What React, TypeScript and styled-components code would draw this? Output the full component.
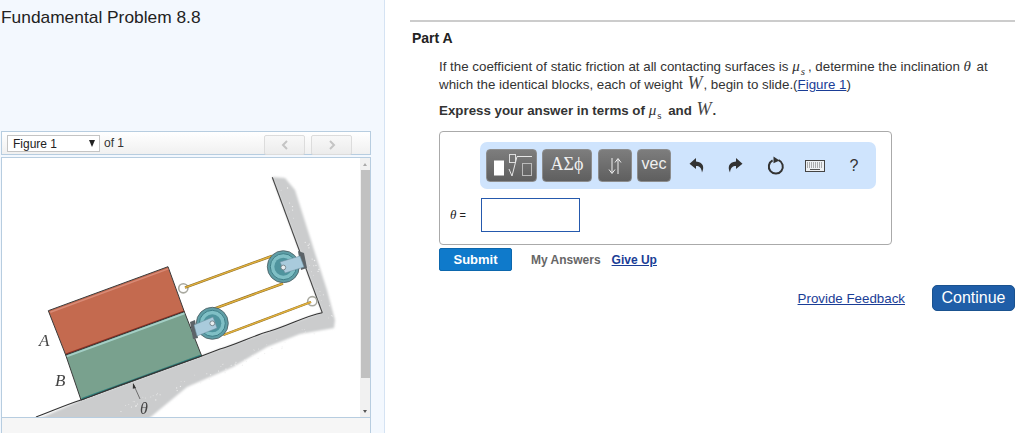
import React from "react";
import styled, { createGlobalStyle } from "styled-components";

const Global = createGlobalStyle`
  html, body { margin: 0; padding: 0; background: #fff; overflow: hidden; }
  body { font-family: "Liberation Sans", Arial, sans-serif; color: #333; }
`;
const Page = styled.div`display: flex; width: 1024px; height: 433px; overflow: hidden;`;
const LeftCol = styled.div`
  width: 384px; height: 433px; flex: none; background: #f3f8fe;
  border-right: 1px solid #d5e3f3; display: flex; flex-direction: column;
`;
const Title = styled.h1`
  margin: 0; padding: 6px 0 0 1px; height: 131px; flex: none; box-sizing: border-box;
  font-size: 17.35px; line-height: 22px; font-weight: 400; color: #222; white-space: nowrap;
`;
const FigureBar = styled.div`
  margin-left: 1px; width: 370px; height: 24px; flex: none; box-sizing: border-box;
  border: 1px solid #b7cde0; background: linear-gradient(#ffffff, #f0f0f0);
  display: flex; align-items: flex-start; padding: 3px 0 0 5px; font-size: 12px; color: #333;
`;
const FigureSelect = styled.div`
  width: 93px; height: 17px; flex: none; box-sizing: border-box; background: #fff; border: 1px solid #c4c4c4;
  display: flex; align-items: center; justify-content: space-between; padding: 0 4px 0 5px; color: #222;
`;
const Caret = styled.span`
  width: 0; height: 0; border-left: 3.5px solid transparent; border-right: 3.5px solid transparent;
  border-top: 7px solid #222;
`;
const OfLabel = styled.span`margin-left: 4px; width: 21px; flex: none; line-height: 16px; white-space: nowrap;`;
const NavButton = styled.div<{ $first?: boolean }>`
  width: 41px; height: 20px; flex: none; box-sizing: border-box; margin-left: ${p => (p.$first ? "139px" : "6px")};
  border: 1px solid #dcdcdc; border-radius: 2px; background: linear-gradient(#f8f8f8, #ececec);
  display: flex; align-items: center; justify-content: center;
`;
const Viewer = styled.div`
  margin: 2px 0 0 1px; width: 370px; flex: 1; box-sizing: border-box; border: 1px solid #b7cde0; border-bottom: 0;
  background: #fff; display: flex; flex-direction: column;
`;
const ViewerBody = styled.div`display: flex; height: 259px; flex: none; background: #fff;`;
const Drawing = styled.svg`display: block; width: 358px; height: 259px; flex: none;`;
const Scroll = styled.div`
  width: 10px; background: #f1f1f1; display: flex; flex-direction: column; align-items: center;
`;
const ScrollEnd = styled.div<{ $down?: boolean }>`
  height: 12px; flex: none; display: flex; align-items: center; justify-content: center;
  &::after {
    content: ""; width: 0; height: 0; border-left: 2.5px solid transparent; border-right: 2.5px solid transparent;
    ${p => (p.$down ? "border-top: 3px solid #555;" : "border-bottom: 3px solid #aaa;")}
  }
`;
const ScrollThumb = styled.div`width: 9px; height: 208px; background: #c1c1c1;`;
const ScrollRest = styled.div`flex: 1;`;
const ViewerFoot = styled.div`flex: 1; border-top: 1px solid #b7cde0; background: #f6f6f6;`;

const RightCol = styled.div`flex: 1; padding: 20px 9px 0 25px; min-width: 0;`;
const Rule = styled.div`height: 2px; background: #ccc;`;
const PartTitle = styled.h2`
  margin: 7px 0 0 2px; font-size: 14px; line-height: 18px; font-weight: 700; color: #222;
`;
const Body = styled.div`margin: 11px 0 0 29px; font-size: 13.33px; line-height: 18px; color: #333; white-space: nowrap;`;
const Para = styled.p`margin: 0;`;
const Emph = styled.p`margin: 8px 0 0; font-weight: 700; line-height: 18px;`;
const M = styled.i<{ $gap?: number }>`
  font-family: "Liberation Serif", serif; font-weight: 400; font-size: 15px; line-height: 0;
  margin-right: ${p => p.$gap ?? 0}px;
`;
const Big = styled.i`
  font-family: "Liberation Serif", serif; font-weight: 400; font-size: 18px; line-height: 0; color: #444;
  margin: 0 1px;
`;
const Sub = styled.sub`
  font-size: 11px; line-height: 0; font-family: "Liberation Serif", serif; font-weight: 400; margin: 0 3px 0 1px;
`;
const Link = styled.a`color: #1a3d96; text-decoration: underline;`;
const AnswerBox = styled.div`
  margin: 11px 0 0 29px; width: 453px; height: 114px; box-sizing: border-box;
  border: 1px solid #aaa; border-radius: 4px; background: #fff; padding: 10px 0 0 40px;
`;
const Toolbar = styled.div`
  width: 396px; height: 47px; box-sizing: border-box; background: #cfe4fd; border-radius: 7px;
  display: flex; align-items: flex-start; padding-top: 7px; padding-left: 6px;
`;
const TexButton = styled.div<{ $w: number; $gap?: number }>`
  width: ${p => p.$w}px; height: 33px; box-sizing: border-box; margin-left: ${p => p.$gap ?? 0}px; flex: none;
  border: 1px solid #8d8d8d; border-radius: 4px; background: linear-gradient(#7d7d7d, #5f5f5f);
  color: #f0f0f0; display: flex; align-items: center; justify-content: center;
`;
const GreekLabel = styled.span`font-family: "Liberation Serif", serif; font-size: 18px; position: relative; top: -1px;`;
const VecLabel = styled.span`font-size: 16px; position: relative; top: -2px;`;
const ToolIcon = styled.div<{ $w: number; $gap?: number }>`
  width: ${p => p.$w}px; height: 33px; flex: none; margin-left: ${p => p.$gap ?? 0}px;
  display: flex; align-items: center; justify-content: center; color: #333; font-size: 16px;
`;
const AnswerRow = styled.div`display: flex; align-items: center; margin: 9px 0 0 -30px;`;
const EqLabel = styled.span`width: 31px; flex: none; font-size: 11px; color: #222; white-space: nowrap;`;
const EqTheta = styled.i`font-family: "Liberation Serif", serif; font-size: 13px;`;
const AnswerInput = styled.div`width: 99px; height: 34px; box-sizing: border-box; border: 1px solid #2559ad; background: #fff;`;
const Actions = styled.div`display: flex; align-items: center; margin: 3px 0 0 29px; font-size: 12px; font-weight: 700;`;
const SubmitButton = styled.div`
  width: 73px; height: 23px; box-sizing: border-box; background: #0f7acb; border: 1px solid #0c67ad; border-radius: 2px;
  color: #fff; font-size: 13px; display: flex; align-items: center; justify-content: center;
`;
const Muted = styled.span`margin-left: 19px; color: #666;`;
const GiveUp = styled.a`margin-left: 11px; color: #1a3d96; text-decoration: underline;`;
const Footer = styled.div`display: flex; align-items: center; justify-content: flex-end; margin-top: 14px;`;
const Feedback = styled.a`font-size: 13.33px; color: #1a3d96; text-decoration: underline;`;
const ContinueButton = styled.div`
  margin-left: 27px; width: 83px; height: 26px; box-sizing: border-box; border-radius: 5px; background: #1f5ea8;
  border: 1px solid #1a528f; color: #fff; font-size: 16px; display: flex; align-items: center; justify-content: center;
`;

const speckles: [number, number, number][] = [];
for (let i = 0; i < 90; i++) {
  const t = i * 12.9898;
  const a = Math.abs(Math.sin(t) * 43758.5453) % 1;
  const b = Math.abs(Math.sin(t + 4.1) * 24634.6345) % 1;
  if (i % 3 === 0) {
    speckles.push([278 + a * 50 + b * 10, 188 + a * 130, 0.35 + b * 0.35]);
  } else {
    speckles.push([120 + a * 200, 405 - a * 84 + b * 12, 0.35 + b * 0.35]);
  }
}

const Pulley = ({ cx, cy }: { cx: number; cy: number }) => (
  <g>
    <circle cx={cx} cy={cy} r={16} fill="#5f9ea6" stroke="#4a5a60" strokeWidth={0.8} />
    <circle cx={cx} cy={cy} r={13} fill="#7fbfc5" stroke="#3f7f88" strokeWidth={1} />
    <circle cx={cx} cy={cy} r={9} fill="#4f949e" />
  </g>
);

const Diagram = () => (
  <Drawing viewBox="2 158 358 259">
    <defs>
      <filter id="soft" x="-5%" y="-5%" width="110%" height="110%">
        <feGaussianBlur stdDeviation="0.35" />
      </filter>
      <filter id="softer" x="-5%" y="-5%" width="110%" height="110%">
        <feGaussianBlur stdDeviation="1.1" />
      </filter>
    </defs>
    <g filter="url(#softer)">
      <polygon
        fill="#cbcccd"
        points="272,177 285,178 295,190 302,212 314,250 327,290 335,320 334,328 300,334 267,347 233,367 187,387 147,420 36,420 81,400 201,356 322,312"
      />
    </g>
    <g fill="#f2f2f2">
      {speckles.map(([x, y, r], i) => (
        <circle key={i} cx={x} cy={y} r={r} />
      ))}
    </g>
    <g filter="url(#soft)">
      <polyline points="272.3,177.3 322.3,312.7" fill="none" stroke="#444" strokeWidth={1.1} />
      <polygon points="48.3,310.7 168,266.7 184.3,311.7 65.7,355" fill="#c46a50" stroke="#3a3a3a" strokeWidth={1} />
      <polygon points="50,311.5 168,268.2 168.5,269.6 50.5,312.9" fill="#d98b76" />
      <polygon points="65.7,353.6 184,310.4 184.6,312 66.2,355.2" fill="#8d2f22" />
      <polygon points="65.7,355 184.3,311.7 201.7,356 81,400" fill="#79a18e" stroke="#3a3a3a" strokeWidth={1} />
      <polygon points="66.5,355.6 184,312.6 184.8,314.2 67.1,357.2" fill="#a4cfc6" />
      <polygon points="81.5,398 200.8,354.5 201.4,356 82,399.6" fill="#2f7f7c" />
      <path
        d="M322.3,312.7 C305,316 290,325 270,331 C255,335 235,345 220,349 C212,352 207,354 201.7,356 C170,367 140,378 118,386 C105,391 92,396 81,400 C65,405 50,412 36,417"
        fill="none"
        stroke="#333"
        strokeWidth={1.1}
      />
      <circle cx={183.3} cy={288.3} r={4.6} fill="#fff" stroke="#a9a9a0" strokeWidth={1.6} />
      <circle cx={312.3} cy={301.2} r={4.6} fill="#fff" stroke="#a9a9a0" strokeWidth={1.6} />
      <g stroke="#8a6a25" strokeWidth={2.4} fill="none">
        <line x1="185" y1="287.6" x2="272" y2="256" />
        <line x1="283" y1="283.5" x2="213.3" y2="309" />
        <line x1="311" y1="302" x2="223.3" y2="335" />
      </g>
      <g stroke="#e2b23e" strokeWidth={1.4} fill="none">
        <line x1="185" y1="287.6" x2="272" y2="256" />
        <line x1="283" y1="283.5" x2="213.3" y2="309" />
        <line x1="311" y1="302" x2="223.3" y2="335" />
      </g>
      <Pulley cx={283.3} cy={266.7} />
      <Pulley cx={212.3} cy={323.3} />
      <polygon points="298,251 304,253 307,268 301,270" fill="#5c6468" />
      <polygon points="190,322 195,320 198,338 193,339" fill="#5c6468" />
      <polygon points="280,262 300,256 304,267 285,273" fill="#a9cbdc" stroke="#6a8c9c" strokeWidth={0.5} />
      <polygon points="194,325 213,317 217,328 197,336" fill="#a9cbdc" stroke="#6a8c9c" strokeWidth={0.5} />
      <circle cx={283.3} cy={267.5} r={2.4} fill="#e8eef0" stroke="#66767c" strokeWidth={0.8} />
      <circle cx={212.3} cy={323.3} r={2.4} fill="#e8eef0" stroke="#66767c" strokeWidth={0.8} />
      <line x1="133.3" y1="384" x2="140" y2="399" stroke="#444" strokeWidth={0.7} />
      <polygon points="133,383 136,388 132.8,388.8" fill="#333" />
      <text x="39" y="346" fontFamily="Liberation Serif, serif" fontStyle="italic" fontSize="17" fill="#444">A</text>
      <text x="55" y="386" fontFamily="Liberation Serif, serif" fontStyle="italic" fontSize="17" fill="#444">B</text>
      <text x="140" y="414" fontFamily="Liberation Serif, serif" fontStyle="italic" fontSize="16" fill="#444">θ</text>
    </g>
  </Drawing>
);

const Chevron = ({ left }: { left?: boolean }) => (
  <svg width="8" height="10" viewBox="0 0 8 10">
    <path d={left ? "M6 1 L2 5 L6 9" : "M2 1 L6 5 L2 9"} fill="none" stroke="#c4c4c4" strokeWidth="2" />
  </svg>
);

const Reply = ({ flip }: { flip?: boolean }) => (
  <svg width="16" height="17" viewBox="0 0 16 17" style={flip ? { transform: "scaleX(-1)" } : undefined}>
    <path d="M7 1 L0.5 6.8 L7 12 V9 C10.5 9 12.4 10.5 13 15.5 C15.5 10.5 14.5 5.2 7 4.6 Z" fill="#333" />
  </svg>
);

const Reload = () => (
  <svg width="18" height="20" viewBox="0 0 18 20">
    <path d="M11.6 4.2 A7 7 0 1 1 5.6 4.4" fill="none" stroke="#333" strokeWidth="2" />
    <polygon points="6.5,0.6 12.5,4.4 6.5,7.2" fill="#333" />
  </svg>
);

const Keyboard = () => (
  <svg width="20" height="12" viewBox="0 0 20 12">
    <rect x="0.5" y="0.5" width="19" height="11" fill="#eef1f4" stroke="#444" />
    <g stroke="#666" strokeWidth="1" strokeDasharray="1 1">
      <line x1="2" y1="3" x2="18" y2="3" />
      <line x1="2" y1="5" x2="18" y2="5" />
      <line x1="2" y1="7" x2="18" y2="7" />
    </g>
    <line x1="5" y1="9.5" x2="15" y2="9.5" stroke="#555" />
  </svg>
);

const TemplatesIcon = () => (
  <svg width="47" height="28" viewBox="0 0 47 28">
    <rect x="6" y="8.5" width="10" height="15" fill="#fff" />
    <rect x="21.5" y="2.5" width="6" height="8" fill="none" stroke="#ddd" />
    <path d="M21 17 L24 24 L29 4.5 H44" fill="none" stroke="#e6e6e6" strokeWidth="1" />
    <rect x="34.5" y="11.5" width="9" height="12" fill="none" stroke="#bbb" />
  </svg>
);

const ArrowsIcon = () => (
  <svg width="16" height="18" viewBox="0 0 16 18">
    <path d="M5 1 V16 M2 12.5 L5 16.5 L8 12.5 M11 17 V2 M8 5.5 L11 1.5 L14 5.5" fill="none" stroke="#f0f0f0" strokeWidth="1" />
  </svg>
);

export default function App() {
  return (
    <Page>
      <Global />
      <LeftCol>
        <Title>Fundamental Problem 8.8</Title>
        <FigureBar>
          <FigureSelect>
            Figure 1 <Caret />
          </FigureSelect>
          <OfLabel>of 1</OfLabel>
          <NavButton $first>
            <Chevron left />
          </NavButton>
          <NavButton>
            <Chevron />
          </NavButton>
        </FigureBar>
        <Viewer>
          <ViewerBody>
            <Diagram />
            <Scroll>
              <ScrollEnd />
              <ScrollThumb />
              <ScrollRest />
              <ScrollEnd $down />
            </Scroll>
          </ViewerBody>
          <ViewerFoot />
        </Viewer>
      </LeftCol>
      <RightCol>
        <Rule />
        <PartTitle>Part A</PartTitle>
        <Body>
          <Para>
            If the coefficient of static friction at all contacting surfaces is <M>μ</M>
            <Sub><i>s</i></Sub>, determine the inclination <M $gap={2}>θ</M> at
            <br />
            which the identical blocks, each of weight <Big>W</Big>, begin to slide.(<Link>Figure 1</Link>)
          </Para>
          <Emph>
            Express your answer in terms of <M>μ</M>
            <Sub>s</Sub> and <Big>W</Big>.
          </Emph>
        </Body>
        <AnswerBox>
          <Toolbar>
            <TexButton $w={51}><TemplatesIcon /></TexButton>
            <TexButton $w={50} $gap={5}><GreekLabel>ΑΣϕ</GreekLabel></TexButton>
            <TexButton $w={34} $gap={6}><ArrowsIcon /></TexButton>
            <TexButton $w={34} $gap={5}><VecLabel>vec</VecLabel></TexButton>
            <ToolIcon $w={52}><Reply /></ToolIcon>
            <ToolIcon $w={24}><Reply flip /></ToolIcon>
            <ToolIcon $w={58}><Reload /></ToolIcon>
            <ToolIcon $w={20}><Keyboard /></ToolIcon>
            <ToolIcon $w={40} $gap={9}>?</ToolIcon>
          </Toolbar>
          <AnswerRow>
            <EqLabel><EqTheta>θ</EqTheta> =</EqLabel>
            <AnswerInput />
          </AnswerRow>
        </AnswerBox>
        <Actions>
          <SubmitButton>Submit</SubmitButton>
          <Muted>My Answers</Muted>
          <GiveUp>Give Up</GiveUp>
        </Actions>
        <Footer>
          <Feedback>Provide Feedback</Feedback>
          <ContinueButton>Continue</ContinueButton>
        </Footer>
      </RightCol>
    </Page>
  );
}
